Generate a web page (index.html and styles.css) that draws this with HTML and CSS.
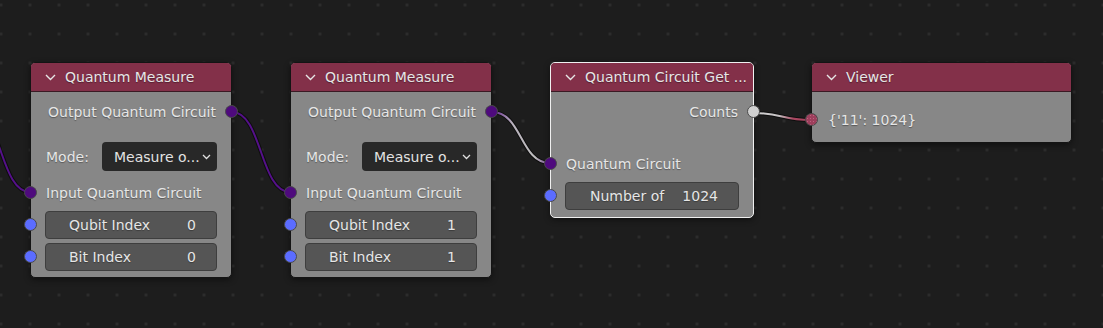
FILE: index.html
```html
<!DOCTYPE html>
<html lang="en">
<head>
    <meta charset="UTF-8">
    <title>Quantum Nodes</title>
    <link rel="stylesheet" href="styles.css">
</head>
<body>
    <div class="canvas">

        <!-- links between sockets -->
        <svg class="links" width="1103" height="328" viewBox="0 0 1103 328">
            <defs>
                <linearGradient id="lnk2" x1="492" y1="0" x2="550" y2="0" gradientUnits="userSpaceOnUse">
                    <stop offset="0" stop-color="#5c1a8c"/>
                    <stop offset="0.35" stop-color="#b9b2bd"/>
                    <stop offset="0.75" stop-color="#bdbdbd"/>
                    <stop offset="1" stop-color="#6a3a8a"/>
                </linearGradient>
                <linearGradient id="lnk3" x1="753" y1="0" x2="811" y2="0" gradientUnits="userSpaceOnUse">
                    <stop offset="0" stop-color="#d6d6d6"/>
                    <stop offset="0.45" stop-color="#c4c0c2"/>
                    <stop offset="0.7" stop-color="#a8455f"/>
                    <stop offset="1" stop-color="#a8455f"/>
                </linearGradient>
            </defs>
            <g fill="none" stroke-linecap="round">
                <path class="edge" d="M -28 112 C 2 112, 0 192, 30 192"/>
                <path class="edge" d="M 232 112 C 262 112, 260 192, 290 192"/>
                <path class="edge" d="M 492 112 C 522 112, 520 163, 550 163"/>
                <path class="edge" d="M 753 113 C 783 113, 781 120, 811 120"/>
                <path stroke="#55118a" stroke-width="2" d="M -28 112 C 2 112, 0 192, 30 192"/>
                <path stroke="#55118a" stroke-width="2" d="M 232 112 C 262 112, 260 192, 290 192"/>
                <path stroke="url(#lnk2)" stroke-width="2" d="M 492 112 C 522 112, 520 163, 550 163"/>
                <path stroke="url(#lnk3)" stroke-width="2" d="M 753 113 C 783 113, 781 120, 811 120"/>
            </g>
        </svg>

        <!-- measure node 1 -->
        <div class="node n1">
            <div class="header">
                <svg class="chev" width="11" height="7" viewBox="0 0 11 7"><path d="M1 1 L5.5 5.5 L10 1" fill="none" stroke="#e6e6e6" stroke-width="1.4"/></svg>
                <span>Quantum Measure</span>
            </div>
            <div class="body">
                <div class="row out">Output Quantum Circuit<i class="sock right purple"></i></div>
                <div class="row mode">
                    <span>Mode:</span>
                    <div class="select">Measure o...
                        <svg width="9" height="6" viewBox="0 0 9 6"><path d="M1 1 L4.5 4.5 L8 1" fill="none" stroke="#e0e0e0" stroke-width="1.3"/></svg>
                    </div>
                </div>
                <div class="row in">Input Quantum Circuit<i class="sock left purple"></i></div>
                <div class="field"><span>Qubit Index</span><span>0</span><i class="sock left blue"></i></div>
                <div class="field"><span>Bit Index</span><span>0</span><i class="sock left blue"></i></div>
            </div>
        </div>

        <!-- measure node 2 -->
        <div class="node n2">
            <div class="header">
                <svg class="chev" width="11" height="7" viewBox="0 0 11 7"><path d="M1 1 L5.5 5.5 L10 1" fill="none" stroke="#e6e6e6" stroke-width="1.4"/></svg>
                <span>Quantum Measure</span>
            </div>
            <div class="body">
                <div class="row out">Output Quantum Circuit<i class="sock right purple"></i></div>
                <div class="row mode">
                    <span>Mode:</span>
                    <div class="select">Measure o...
                        <svg width="9" height="6" viewBox="0 0 9 6"><path d="M1 1 L4.5 4.5 L8 1" fill="none" stroke="#e0e0e0" stroke-width="1.3"/></svg>
                    </div>
                </div>
                <div class="row in">Input Quantum Circuit<i class="sock left purple"></i></div>
                <div class="field"><span>Qubit Index</span><span>1</span><i class="sock left blue"></i></div>
                <div class="field"><span>Bit Index</span><span>1</span><i class="sock left blue"></i></div>
            </div>
        </div>

        <!-- get counts node (selected) -->
        <div class="node n3 selected">
            <div class="header">
                <svg class="chev" width="11" height="7" viewBox="0 0 11 7"><path d="M1 1 L5.5 5.5 L10 1" fill="none" stroke="#e6e6e6" stroke-width="1.4"/></svg>
                <span>Quantum Circuit Get ...</span>
            </div>
            <div class="body">
                <div class="row out">Counts<i class="sock right grey"></i></div>
                <div class="row in gap">Quantum Circuit<i class="sock left purple"></i></div>
                <div class="field"><span>Number of</span><span>1024</span><i class="sock left blue"></i></div>
            </div>
        </div>

        <!-- viewer node -->
        <div class="node n4">
            <div class="header">
                <svg class="chev" width="11" height="7" viewBox="0 0 11 7"><path d="M1 1 L5.5 5.5 L10 1" fill="none" stroke="#e6e6e6" stroke-width="1.4"/></svg>
                <span>Viewer</span>
            </div>
            <div class="body">
                <div class="row in view">{'11': 1024}<i class="sock left rose"></i></div>
            </div>
        </div>

    </div>
</body>
</html>
```

FILE: styles.css
```css
body {
    margin: 0;
    background-color: #1d1d1d;
    font-family: "DejaVu Sans", "Liberation Sans", sans-serif;
    font-size: 14px;
    color: #e6e6e6;
}
.canvas {
    position: relative;
    width: 1103px;
    height: 328px;
    overflow: hidden;
    background-color: #1d1d1d;
    background-image: radial-gradient(circle, #2d2d2d 1.3px, transparent 1.6px);
    background-size: 29px 29px;
    background-position: -13.5px -9.5px;
}
.links {
    position: absolute;
    left: 0;
    top: 0;
}
.edge {
    stroke: rgba(0, 0, 0, 0.55);
    stroke-width: 4;
}

/* nodes sit on a free canvas */
.node {
    position: absolute;
    top: 62px;
    box-sizing: border-box;
    border: 1px solid #141414;
    border-radius: 5px;
    background-color: #878787;
    box-shadow: 0 2px 6px rgba(0, 0, 0, 0.45);
}
.n1 { left: 30px; width: 202px; height: 216px; }
.n2 { left: 290px; width: 202px; height: 216px; }
.n3 { left: 550px; width: 204px; height: 156px; }
.n4 { left: 811px; width: 261px; height: 81px; }
.node.selected {
    border-color: #f0f0f0;
}

.header {
    display: flex;
    align-items: center;
    gap: 9px;
    height: 28px;
    padding-left: 14px;
    background-color: #833049;
    border-bottom: 1px solid #3a1a24;
    border-radius: 4px 4px 0 0;
    font-size: 14px;
    text-shadow: 0 1px 1px rgba(0, 0, 0, 0.35);
}
.chev {
    flex: 0 0 auto;
}

.body {
    display: flex;
    flex-direction: column;
    gap: 4px;
    padding-top: 6px;
}
.row {
    position: relative;
    display: flex;
    align-items: center;
    height: 28px;
    padding: 0 15px;
    text-shadow: 0 1px 1px rgba(0, 0, 0, 0.35);
}
.row.out {
    justify-content: flex-end;
}
.row.mode {
    justify-content: space-between;
    margin-top: 12px;
    padding-right: 14px;
    height: 29px;
}
.row.in {
    margin-top: 4px;
}
.row.gap {
    margin-top: 20px;
}
.row.view {
    margin-top: 8px;
    padding-left: 16px;
}

.select {
    display: flex;
    align-items: center;
    justify-content: space-between;
    box-sizing: border-box;
    width: 115px;
    height: 29px;
    padding: 0 6px 0 12px;
    background-color: #282828;
    border-radius: 4px;
    color: #e2e2e2;
    text-shadow: none;
}

.field {
    position: relative;
    display: flex;
    justify-content: space-between;
    align-items: center;
    height: 26px;
    margin: 0 14px;
    padding: 0 20px 0 23px;
    background-color: #555555;
    border: 1px solid #3e3e3e;
    border-radius: 4px;
    text-shadow: 0 1px 1px rgba(0, 0, 0, 0.3);
}
.n3 .field {
    padding-left: 24px;
}

/* sockets */
.sock {
    position: absolute;
    top: 50%;
    width: 11px;
    height: 11px;
    margin-top: -7px;
    border: 1px solid #4a4a4a;
    border-radius: 50%;
}
.row .sock.left { left: -7px; }
.row .sock.right { right: -7px; }
.field .sock.left { left: -22px; }
.purple { background-color: #4e0a7d; }
.blue { background-color: #5b6cff; }
.grey { background-color: #cfcfcf; }
.rose {
    background-color: #9d3f5c;
    background-image: radial-gradient(circle, #c06080 0.7px, transparent 1px);
    background-size: 3px 3px;
}
```
